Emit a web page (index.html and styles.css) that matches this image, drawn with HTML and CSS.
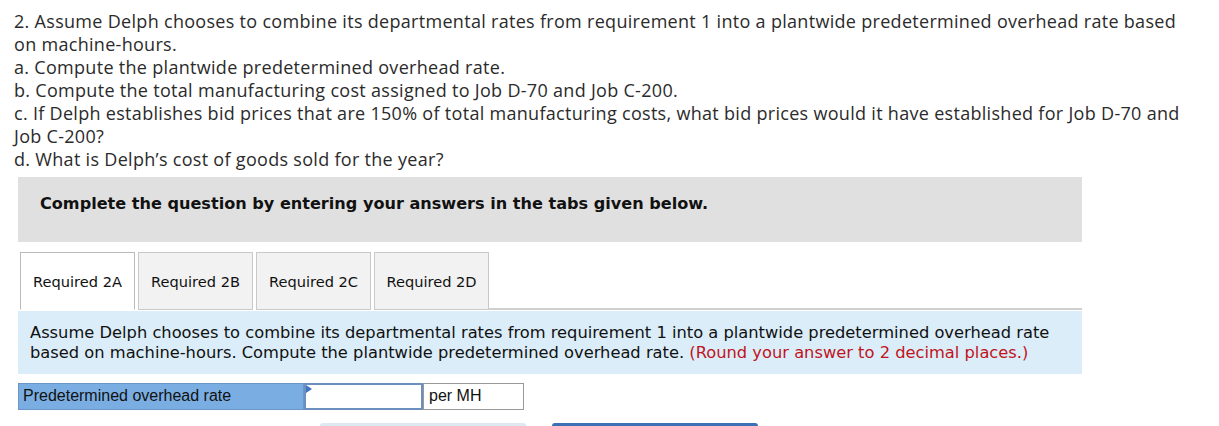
FILE: index.html
```html
<!DOCTYPE html>
<html>
<head>
<meta charset="utf-8">
<link rel="stylesheet" href="styles.css">
</head>
<body>
<div class="question">
  <p>2. Assume Delph chooses to combine its departmental rates from requirement 1 into a plantwide predetermined overhead rate based on machine-hours.</p>
  <p>a. Compute the plantwide predetermined overhead rate.</p>
  <p>b. Compute the total manufacturing cost assigned to Job D-70 and Job C-200.</p>
  <p>c. If Delph establishes bid prices that are 150% of total manufacturing costs, what bid prices would it have established for Job D-70 and Job C-200?</p>
  <p>d. What is Delph’s cost of goods sold for the year?</p>
</div>
<div class="panel">
  <div class="instruct">Complete the question by entering your answers in the tabs given below.</div>
  <div class="tabs">
    <div class="tab active">Required 2A</div>
    <div class="tab">Required 2B</div>
    <div class="tab">Required 2C</div>
    <div class="tab">Required 2D</div>
    <div class="tabfill"></div>
  </div>
  <div class="info">Assume Delph chooses to combine its departmental rates from requirement 1 into a plantwide predetermined overhead rate based on machine-hours. Compute the plantwide predetermined overhead rate. <span class="red">(Round your answer to 2 decimal places.)</span></div>
  <div class="answer">
    <div class="label">Predetermined overhead rate</div>
    <div class="input"><span class="flag"></span></div>
    <div class="unit">per MH</div>
  </div>
  <div class="buttons">
    <div class="btn prev"></div>
    <div class="btn next"></div>
  </div>
</div>
</body>
</html>
```
FILE: styles.css
```css
html, body { margin: 0; padding: 0; background: #fff; }
body { width: 1219px; height: 426px; overflow: hidden; }
.question {
  padding: 10px 0 0 14px;
  font-family: "Open Sans", Lato, sans-serif;
  font-size: 18px;
  letter-spacing: 0.3px;
  line-height: 23px;
  color: #2b2b2b;
  width: 1172px;
}
.question p { margin: 0; }
.panel { margin: 6px 0 0 18px; width: 1064px; }
.instruct {
  background: #e0e0e0;
  height: 65px;
  box-sizing: border-box;
  padding: 17px 0 0 22px;
  font-family: "DejaVu Sans", Verdana, sans-serif;
  font-weight: bold;
  font-size: 16.1px;
  color: #111;
}
.tabs { display: flex; margin-top: 10px; height: 58px; }
.tab {
  box-sizing: border-box;
  width: 115px;
  margin-right: 3px;
  border: 1px solid #c9c9c9;
  background: #f2f2f2;
  display: flex; align-items: center; justify-content: center;
  font-family: "DejaVu Sans", Verdana, sans-serif;
  font-size: 14.6px;
  color: #111;
}
.tab:first-child { margin-left: 2px; }
.tab.active { background: #fff; border-color: #bbb; border-bottom: 1px solid #fff; }
.tabfill { flex: 1; border-bottom: 2px solid #cfcfcf; margin-left: -3px; }
.info {
  background: #dbedf9;
  padding: 12px 12px 11px 12px;
  margin-top: 1px;
  font-family: "DejaVu Sans", Verdana, sans-serif;
  font-size: 16.3px;
  line-height: 20px;
  color: #111;
}
.red { color: #c0141c; }
.answer { display: flex; margin-top: 9px; height: 27px; }
.label {
  width: 286px; box-sizing: border-box;
  background: #7aaee3;
  border: 1px solid #6b95c4;
  padding: 3px 4px;
  font-family: "Liberation Sans", Arial, sans-serif;
  font-size: 16px;
  color: #111;
}
.input {
  position: relative;
  width: 119px; box-sizing: border-box;
  border: 2px solid #6b8fbf;
  background: #fff;
}
.flag {
  position: absolute; left: 0; top: 0;
  width: 0; height: 0;
  border-top: 4px solid transparent;
  border-bottom: 4px solid transparent;
  border-left: 6px solid #3f74c0;
}
.unit {
  width: 101px; box-sizing: border-box;
  border: 1px solid #999;
  padding: 3px 5px;
  font-family: "Liberation Sans", Arial, sans-serif;
  font-size: 16px;
  color: #111;
}
.buttons { display: flex; margin: 13px 0 0 302px; gap: 26px; height: 4px; overflow: hidden; }
.btn { width: 206px; height: 30px; border-radius: 3px; }
.prev { background: #dde8f3; }
.next { background: #3a70b5; }
```
